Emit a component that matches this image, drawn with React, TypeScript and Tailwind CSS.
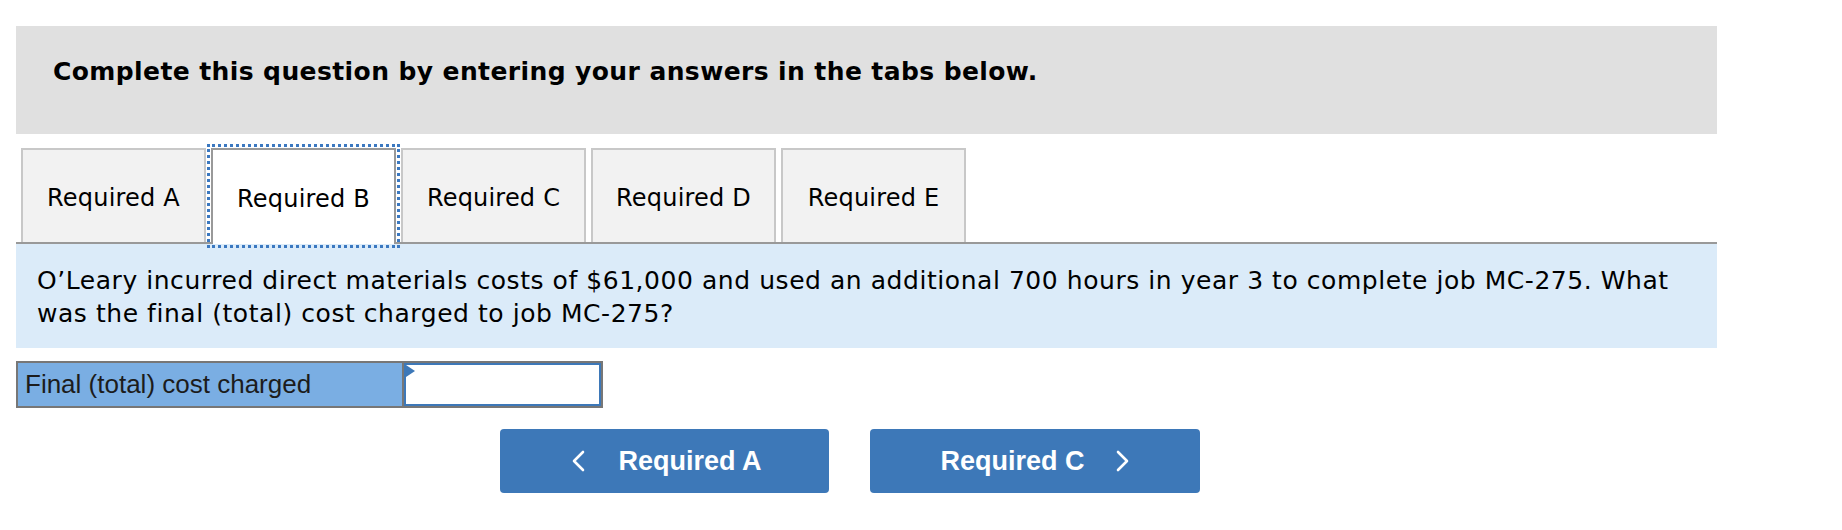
import React from 'react'

const tabs = ['Required A', 'Required B', 'Required C', 'Required D', 'Required E']

const ChevronLeft = () => (
  <svg width="14" height="22" viewBox="0 0 14 22" fill="none">
    <path d="M12 2 L3 11 L12 20" stroke="white" strokeWidth="2.6" strokeLinecap="round" strokeLinejoin="round" />
  </svg>
)

const ChevronRight = () => (
  <svg width="14" height="22" viewBox="0 0 14 22" fill="none">
    <path d="M2 2 L11 11 L2 20" stroke="white" strokeWidth="2.6" strokeLinecap="round" strokeLinejoin="round" />
  </svg>
)

export default function App() {
  const active = 1
  return (
    <div className="min-h-[530px] bg-white pt-[26px] pl-[16px]">
      <div className="w-[1701px]">
        {/* instructions */}
        <div className="h-[108px] bg-[#e0e0e0] pl-[37px] pt-[32px]">
          <p className="font-['DejaVu_Sans',sans-serif] text-[25px] leading-[28px] tracking-[0.4px] font-bold text-black">
            Complete this question by entering your answers in the tabs below.
          </p>
        </div>

        {/* tabs */}
        <div className="mt-[14px] flex items-start gap-[5px] pl-[5px] border-b-2 border-[#999999]">
          {tabs.map((t, i) =>
            i === active ? (
              <button
                key={t}
                className="relative -mb-[2px] flex h-[96px] w-[185px] items-center justify-center border-2 border-b-0 border-[#999999] bg-white pt-[4px] font-['DejaVu_Sans',sans-serif] text-[24px] tracking-[0.2px] text-black outline-3 outline-dotted outline-offset-1 outline-[#3b78c0]"
              >
                {t}
              </button>
            ) : (
              <button
                key={t}
                className="flex h-[94px] w-[185px] items-center justify-center border-2 border-b-0 border-[#c8c8c8] bg-[#f2f2f2] pt-[4px] font-['DejaVu_Sans',sans-serif] text-[24px] tracking-[0.2px] text-black"
              >
                {t}
              </button>
            )
          )}
        </div>

        {/* question */}
        <div className="bg-[#dbebf9] pl-[21px] pr-[30px] pt-[20px] pb-[18px]">
          <p className="font-['DejaVu_Sans',sans-serif] text-[25px] leading-[33px] tracking-[0.55px] text-black">
            O’Leary incurred direct materials costs of $61,000 and used an additional 700 hours in year 3 to complete job MC-275. What was the final (total) cost charged to job MC-275?
          </p>
        </div>

        {/* answer row */}
        <div className="mt-[13px] flex h-[47px] w-[587px] border-2 border-[#777777]">
          <div className="flex w-[384px] items-center bg-[#7aaee3] pl-[7px] font-['Liberation_Sans',Arial,sans-serif] text-[26px] text-[#1c1c1c]">
            Final (total) cost charged
          </div>
          <div className="w-[2px] bg-[#777777]" />
          <div className="relative flex-1 border-2 border-[#3d78b8] bg-white">
            <span className="absolute left-0 top-0 h-0 w-0 border-y-[6px] border-l-[9px] border-y-transparent border-l-[#3d78b8]" />
          </div>
        </div>

        {/* navigation */}
        <div className="mt-[21px] ml-[484px] flex gap-[41px]">
          <button className="flex h-[64px] w-[329px] items-center justify-center gap-[33px] rounded-[4px] bg-[#3d78b8] pl-[4px] font-['Liberation_Sans',Arial,sans-serif] text-[27px] font-bold text-white">
            <ChevronLeft />
            <span>Required A</span>
          </button>
          <button className="flex h-[64px] w-[330px] items-center justify-center gap-[31px] rounded-[4px] bg-[#3d78b8] font-['Liberation_Sans',Arial,sans-serif] text-[27px] font-bold text-white">
            <span>Required C</span>
            <ChevronRight />
          </button>
        </div>
      </div>
    </div>
  )
}
